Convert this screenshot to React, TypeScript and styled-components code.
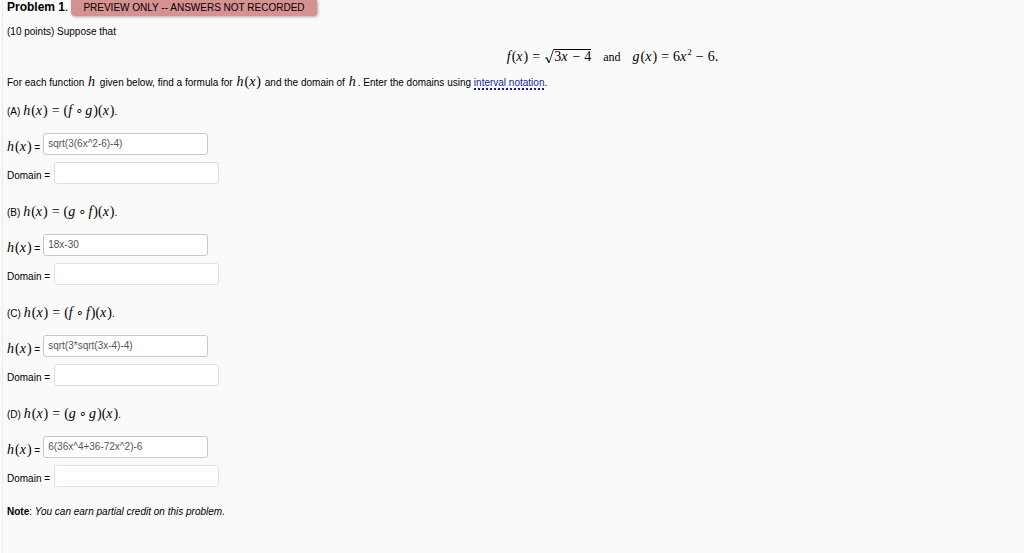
import { useState } from 'react';
import styled, { createGlobalStyle } from 'styled-components';

const GlobalStyle = createGlobalStyle`
	* {
		box-sizing: border-box;
	}

	body {
		margin: 0;
		background: #fafafa;
		color: #000;
		font-family: 'Liberation Sans', Arial, sans-serif;
		font-size: 10px;
		line-height: 14px;
	}
`;

const Page = styled.main`
	min-height: 100vh;
	margin-left: 2px;
	padding: 0 6px 24px 4px;
	border-left: 1px solid #ececec;
`;

const Header = styled.header`
	display: flex;
	gap: 3px;
	height: 16px;
	margin-bottom: 9px;
`;

const Title = styled.h1`
	margin: 0;
	font-size: 12px;
	font-weight: normal;
	line-height: 14px;
`;

const PreviewBadge = styled.div`
	padding: 0 12px;
	border-radius: 0 0 4px 4px;
	background: #d69191;
	box-shadow: 1px 1px 3px #aaa;
	line-height: 15px;
`;

const Paragraph = styled.p`
	margin: 0;
	height: 14px;
	white-space: nowrap;
`;

const Equation = styled.div`
	height: 18px;
	margin: 10px 0 8px;
	padding-left: 200px;
	text-align: center;
	white-space: nowrap;
	line-height: 18px;
`;

const GlossaryLink = styled.a`
	display: inline-block;
	height: 14px;
	border-bottom: 2px dotted #1a1aa6;
	color: #1a1aa6;
	text-decoration: none;
`;

const Math = styled.span<{ $spaced?: boolean }>`
	margin: 0 ${({ $spaced }) => ($spaced ? '1px' : '0')};
	font-family: 'Liberation Serif', 'Times New Roman', serif;
	font-size: 14px;
	line-height: 14px;
`;

const Var = styled.i`
	margin-right: 1px;
`;

const Op = styled.span`
	margin: 0 4px;
`;

const Compose = styled.span`
	margin: 0 2px;
	font-family: 'DejaVu Sans', sans-serif;
	font-size: 13px;
	line-height: 1;
`;

const Radicand = styled.span`
	display: inline-block;
	height: 14px;
	border-top: 1px solid #000;
	line-height: 14px;
`;

const RadicalSign = styled.svg`
	width: 10px;
	height: 15px;
	vertical-align: -3px;
`;

const And = styled.span`
	margin: 0 12px;
	font-size: 12px;
`;

const Power = styled.sup`
	font-size: 9px;
	line-height: 0;
`;

const Parts = styled.div`
	display: flex;
	flex-direction: column;
	gap: 21px;
	margin: 15px 0 18px;
`;

const Part = styled.section`
	display: flex;
	flex-direction: column;
	gap: 7px;
`;

const PartTitle = styled.h2`
	height: 14px;
	margin: 0 0 8px;
	font-size: 10px;
	font-weight: normal;
`;

const AnswerRow = styled.div`
	display: flex;
	gap: 3px;
	height: 22px;
`;

const AnswerLabel = styled.label<{ $wide?: boolean }>`
	min-width: ${({ $wide }) => ($wide ? '44px' : '33px')};
	padding-top: 7px;
	white-space: nowrap;
`;

const AnswerInput = styled.input<{ $soft?: boolean }>`
	width: 165px;
	height: 22px;
	padding: 0 4px 1px;
	border: 1px solid ${({ $soft }) => ($soft ? '#e0e0e0' : '#c8c8c8')};
	border-radius: 3px;
	background: #fff;
	color: #555;
	font-family: inherit;
	font-size: 10px;
`;

const Note = styled.p`
	margin: 0;
`;

const Call = ({ name }: { name: string }) => (
	<>
		<Var>{name}</Var>(<Var>x</Var>)
	</>
);

const parts = [
	{ id: 'A', outer: 'f', inner: 'g', answer: 'sqrt(3(6x^2-6)-4)' },
	{ id: 'B', outer: 'g', inner: 'f', answer: '18x-30' },
	{ id: 'C', outer: 'f', inner: 'f', answer: 'sqrt(3*sqrt(3x-4)-4)' },
	{ id: 'D', outer: 'g', inner: 'g', answer: '6(36x^4+36-72x^2)-6' },
];

type PartProps = (typeof parts)[number];

const ProblemPart = ({ id, outer, inner, answer }: PartProps) => {
	const [formula, setFormula] = useState(answer);
	const [domain, setDomain] = useState('');

	return (
		<Part>
			<PartTitle>
				({id}){' '}
				<Math>
					<Call name='h' />
					<Op>=</Op>(<Var>{outer}</Var>
					<Compose>∘</Compose>
					<Var>{inner}</Var>)(<Var>x</Var>)
				</Math>
				.
			</PartTitle>
			<AnswerRow>
				<AnswerLabel htmlFor={`formula-${id}`}>
					<Math>
						<Call name='h' />
					</Math>{' '}
					=
				</AnswerLabel>
				<AnswerInput
					id={`formula-${id}`}
					value={formula}
					onChange={(e) => setFormula(e.target.value)}
				/>
			</AnswerRow>
			<AnswerRow>
				<AnswerLabel $wide htmlFor={`domain-${id}`}>
					Domain =
				</AnswerLabel>
				<AnswerInput
					$soft
					id={`domain-${id}`}
					value={domain}
					onChange={(e) => setDomain(e.target.value)}
				/>
			</AnswerRow>
		</Part>
	);
};

const App = () => {
	return (
		<Page>
			<GlobalStyle />
			<Header>
				<Title>
					<b>Problem 1</b>.
				</Title>
				<PreviewBadge>PREVIEW ONLY -- ANSWERS NOT RECORDED</PreviewBadge>
			</Header>
			<Paragraph>(10 points) Suppose that</Paragraph>
			<Equation>
				<Math>
					<Call name='f' />
					<Op>=</Op>
					<RadicalSign viewBox='0 0 10 15' fill='none' stroke='#000'>
						<path d='M1 9.5 L2.5 8.5' strokeWidth='0.7' />
						<path d='M2.5 8.5 L5 13.5' strokeWidth='1.3' />
						<path d='M5 14 L9.5 0.5 H10' strokeWidth='0.8' />
					</RadicalSign>
					<Radicand>
						3<Var>x</Var>
						<Op>−</Op>4
					</Radicand>
					<And>and</And>
					<Call name='g' />
					<Op>=</Op>6<Var>x</Var>
					<Power>2</Power>
					<Op>−</Op>6.
				</Math>
			</Equation>
			<Paragraph>
				For each function{' '}
				<Math $spaced>
					<Var>h</Var>
				</Math>{' '}
				given below, find a formula for{' '}
				<Math $spaced>
					<Call name='h' />
				</Math>{' '}
				and the domain of{' '}
				<Math $spaced>
					<Var>h</Var>
				</Math>
				. Enter the domains using{' '}
				<GlossaryLink href='#interval-notation'>interval notation</GlossaryLink>.
			</Paragraph>
			<Parts>
				{parts.map((part) => (
					<ProblemPart key={part.id} {...part} />
				))}
			</Parts>
			<Note>
				<b>Note</b>: <i>You can earn partial credit on this problem.</i>
			</Note>
		</Page>
	);
};

export default App;
